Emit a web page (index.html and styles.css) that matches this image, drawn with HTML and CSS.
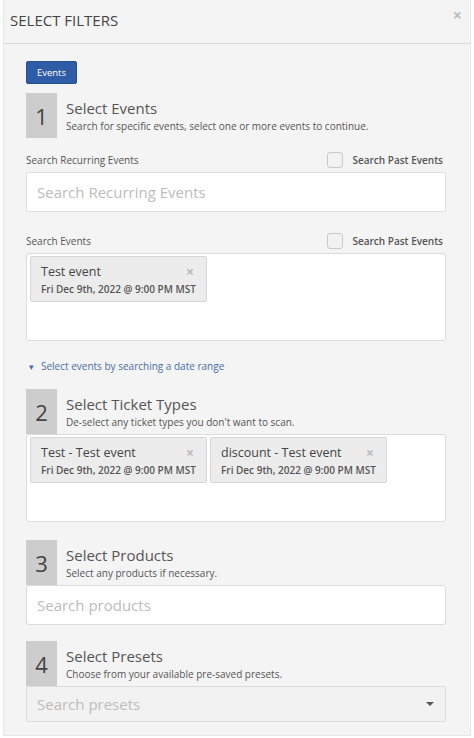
FILE: index.html
```html
<!DOCTYPE html>
<html>
<head>
<meta charset="utf-8">
<link rel="stylesheet" href="styles.css">
</head>
<body>
<div class="modal">
  <div class="modal-header">
    <h1 class="modal-title">SELECT FILTERS</h1>
    <span class="close">&times;</span>
  </div>
  <div class="modal-body">
    <button class="btn-events">Events</button>

    <div class="step">
      <div class="step-num">1</div>
      <div class="step-text">
        <div class="step-title">Select Events</div>
        <div class="step-sub">Search for specific events, select one or more events to continue.</div>
      </div>
    </div>

    <div class="field-row">
      <span class="field-label">Search Recurring Events</span>
      <label class="check"><span class="box"></span>Search Past Events</label>
    </div>
    <div class="input"><span class="ph">Search Recurring Events</span></div>

    <div class="field-row second">
      <span class="field-label">Search Events</span>
      <label class="check"><span class="box"></span>Search Past Events</label>
    </div>
    <div class="multi">
      <div class="chip">
        <div class="chip-top"><span class="chip-name">Test event</span><span class="chip-x">&times;</span></div>
        <div class="chip-date">Fri Dec 9th, 2022 @ 9:00 PM MST</div>
      </div>
    </div>

    <div class="range-link"><span class="caret">&#9662;</span>Select events by searching a date range</div>

    <div class="step step2">
      <div class="step-num">2</div>
      <div class="step-text">
        <div class="step-title">Select Ticket Types</div>
        <div class="step-sub">De-select any ticket types you don't want to scan.</div>
      </div>
    </div>
    <div class="multi">
      <div class="chip">
        <div class="chip-top"><span class="chip-name">Test - Test event</span><span class="chip-x">&times;</span></div>
        <div class="chip-date">Fri Dec 9th, 2022 @ 9:00 PM MST</div>
      </div>
      <div class="chip">
        <div class="chip-top"><span class="chip-name">discount - Test event</span><span class="chip-x">&times;</span></div>
        <div class="chip-date">Fri Dec 9th, 2022 @ 9:00 PM MST</div>
      </div>
    </div>

    <div class="step step3">
      <div class="step-num">3</div>
      <div class="step-text">
        <div class="step-title">Select Products</div>
        <div class="step-sub">Select any products if necessary.</div>
      </div>
    </div>
    <div class="input"><span class="ph">Search products</span></div>

    <div class="step step4">
      <div class="step-num">4</div>
      <div class="step-text">
        <div class="step-title">Select Presets</div>
        <div class="step-sub">Choose from your available pre-saved presets.</div>
      </div>
    </div>
    <div class="select"><span class="ph">Search presets</span><span class="sel-caret"></span></div>
  </div>
</div>
</body>
</html>
```
FILE: styles.css
```css
* { box-sizing: border-box; }
html, body { margin: 0; padding: 0; background: #fff; }
body { font-family: "Open Sans", "Noto Sans", sans-serif; color: #555; }

.modal {
  margin: 0 3px 0 3px;
  height: 736px;
  background: #f4f4f4;
  border: 1px solid #e6e6e6;
  border-top: none;
  overflow: hidden;
}
.modal-header {
  height: 44px;
  border-bottom: 1px solid #d9d9d9;
  display: flex;
  align-items: flex-start;
  justify-content: space-between;
  padding: 0 8px 0 6px;
}
.modal-title {
  margin: 10px 0 0 0;
  font-size: 15px;
  font-weight: 400;
  color: #444;
  line-height: 20px;
}
.close {
  margin-top: 5px;
  font-size: 16px;
  font-weight: 700;
  color: #bbb;
  line-height: 20px;
}
.modal-body {
  padding: 17px 24px 0 22px;
}
.btn-events {
  display: block;
  width: 51px;
  height: 23px;
  padding: 0;
  border: 1px solid #25508f;
  border-radius: 2px;
  background: #2e5ca6;
  color: #fff;
  font-family: inherit;
  font-size: 9.5px;
  font-weight: 500;
}
.step {
  display: flex;
  align-items: stretch;
  margin-top: 9px;
}
.step2 { margin-top: 16px; }
.step3 { margin-top: 18px; }
.step4 { margin-top: 16px; }
.step-num {
  width: 31px;
  height: 45px;
  background: #cdcdcd;
  color: #444;
  font-size: 22px;
  display: flex;
  align-items: center;
  justify-content: center;
  flex: none;
}
.step-text {
  padding: 5px 0 0 9px;
}
.step-title {
  font-size: 15px;
  color: #555;
  line-height: 20px;
}
.step-sub {
  font-size: 10px;
  color: #555;
  line-height: 16px;
}
.field-row {
  display: flex;
  justify-content: space-between;
  align-items: center;
  margin-top: 13px;
  height: 18px;
  margin-bottom: 3px;
}
.field-row.second { margin-top: 20px; }
.field-label {
  font-size: 10px;
  color: #555;
}
.check {
  display: flex;
  align-items: center;
  font-size: 10px;
  font-weight: 600;
  color: #555;
  margin-right: 3px;
}
.box {
  width: 16px;
  height: 16px;
  border: 1px solid #c8c8c8;
  border-radius: 3px;
  background: #f2f2f2;
  margin-right: 9px;
}
.input {
  height: 40px;
  background: #fff;
  border: 1px solid #dcdcdc;
  border-radius: 3px;
  display: flex;
  align-items: center;
  padding-left: 10px;
}
.ph {
  font-size: 15px;
  color: #bcbcbc;
}
.multi {
  height: 88px;
  background: #fff;
  border: 1px solid #dcdcdc;
  border-radius: 3px;
  display: flex;
  align-items: flex-start;
  gap: 3px;
  padding: 2px 3px;
}
.chip {
  width: 177px;
  height: 46px;
  background: #ececec;
  border: 1px solid #d6d6d6;
  border-radius: 2px;
  padding: 4px 12px 0 10px;
  white-space: nowrap;
}
.chip-top {
  display: flex;
  justify-content: space-between;
  align-items: center;
  height: 20px;
}
.chip-name {
  font-size: 12.5px;
  color: #444;
}
.chip-x {
  font-size: 14px;
  font-weight: 700;
  color: #bbb;
}
.chip-date {
  font-size: 10px;
  font-weight: 600;
  color: #555;
  line-height: 16px;
}
.range-link {
  margin-top: 18px;
  font-size: 10px;
  color: #4a6ea8;
  display: flex;
  align-items: center;
  padding-left: 3px;
}
.caret {
  font-size: 9px;
  margin-right: 7px;
  color: #3f6bb0;
}
.select {
  height: 36px;
  background: #f2f2f2;
  border: 1px solid #dcdcdc;
  border-radius: 2px;
  display: flex;
  align-items: center;
  justify-content: space-between;
  padding: 0 10px;
}
.sel-caret {
  width: 0;
  height: 0;
  border-left: 4px solid transparent;
  border-right: 4px solid transparent;
  border-top: 4px solid #555;
  margin-right: 1px;
}
```
